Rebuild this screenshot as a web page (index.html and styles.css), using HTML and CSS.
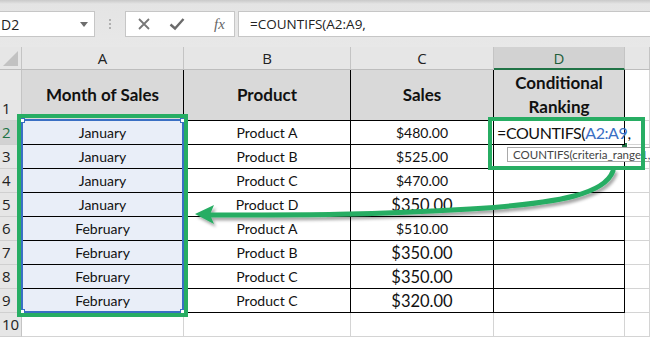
FILE: index.html
```html
<!DOCTYPE html>
<html lang="en">
<head>
    <meta charset="UTF-8">
    <title>COUNTIFS ranking</title>
    <link rel="stylesheet" href="styles.css">
</head>
<body>
    <div class="app">
        <div class="toolbar">
            <div class="name-box">
                <span>D2</span>
                <span class="caret"></span>
            </div>
            <div class="grip"><i></i><i></i><i></i></div>
            <div class="fx-box">
                <svg width="14" height="14" viewBox="0 0 14 14"><path d="M2 2 L12 12 M12 2 L2 12" stroke="#777" stroke-width="1.8" fill="none"/></svg>
                <svg width="16" height="14" viewBox="0 0 16 14"><path d="M1.5 7.5 L6 11.5 L14.5 2" stroke="#6b6b6b" stroke-width="2.4" fill="none"/></svg>
                <span class="fx">fx</span>
            </div>
            <div class="formula-input">=COUNTIFS(A2:A9,</div>
        </div>

        <div class="sheet">
            <!-- column headers -->
            <div class="corner"><span class="tri"></span></div>
            <div class="ch">A</div>
            <div class="ch">B</div>
            <div class="ch">C</div>
            <div class="ch active">D</div>
            <div class="ch"></div>

            <!-- row 1 -->
            <div class="rh">1</div>
            <div class="cell t hd">Month of Sales</div>
            <div class="cell t hd">Product</div>
            <div class="cell t hd">Sales</div>
            <div class="cell t hd">Conditional<br>Ranking</div>
            <div class="cell"></div>

            <!-- row 2 -->
            <div class="rh active">2</div>
            <div class="cell t sel">January</div>
            <div class="cell t">Product A</div>
            <div class="cell t">$480.00</div>
            <div class="cell t edit">=COUNTIFS(<span class="ref">A2:A9</span>,<span class="cursor"></span></div>
            <div class="cell"></div>

            <!-- row 3 -->
            <div class="rh">3</div>
            <div class="cell t sel">January</div>
            <div class="cell t">Product B</div>
            <div class="cell t">$525.00</div>
            <div class="cell t"></div>
            <div class="cell"></div>

            <!-- row 4 -->
            <div class="rh">4</div>
            <div class="cell t sel">January</div>
            <div class="cell t">Product C</div>
            <div class="cell t">$470.00</div>
            <div class="cell t"></div>
            <div class="cell"></div>

            <!-- row 5 -->
            <div class="rh">5</div>
            <div class="cell t sel">January</div>
            <div class="cell t">Product D</div>
            <div class="cell t big">$350.00</div>
            <div class="cell t"></div>
            <div class="cell"></div>

            <!-- row 6 -->
            <div class="rh">6</div>
            <div class="cell t sel">February</div>
            <div class="cell t">Product A</div>
            <div class="cell t">$510.00</div>
            <div class="cell t"></div>
            <div class="cell"></div>

            <!-- row 7 -->
            <div class="rh">7</div>
            <div class="cell t sel">February</div>
            <div class="cell t">Product B</div>
            <div class="cell t big">$350.00</div>
            <div class="cell t"></div>
            <div class="cell"></div>

            <!-- row 8 -->
            <div class="rh">8</div>
            <div class="cell t sel">February</div>
            <div class="cell t">Product C</div>
            <div class="cell t big">$350.00</div>
            <div class="cell t"></div>
            <div class="cell"></div>

            <!-- row 9 -->
            <div class="rh">9</div>
            <div class="cell t sel">February</div>
            <div class="cell t">Product C</div>
            <div class="cell t big">$320.00</div>
            <div class="cell t"></div>
            <div class="cell"></div>

            <!-- row 10 -->
            <div class="rh">10</div>
            <div class="cell"></div>
            <div class="cell"></div>
            <div class="cell"></div>
            <div class="cell"></div>
            <div class="cell"></div>
        </div>

        <!-- overlays -->
        <div class="ref-range">
            <i class="dot tl"></i><i class="dot tr"></i><i class="dot bl"></i><i class="dot br"></i>
        </div>
        <div class="fill-handle"></div>
        <div class="tooltip">COUNTIFS(criteria_range1,</div>
        <div class="mark mark-range"></div>
        <div class="mark mark-formula"></div>

        <svg class="arrow" width="650" height="337" viewBox="0 0 650 337">
            <defs>
                <filter id="shadow" x="-10%" y="-50%" width="120%" height="200%">
                    <feDropShadow dx="2" dy="3" stdDeviation="1.8" flood-color="#000" flood-opacity="0.35"/>
                </filter>
            </defs>
            <g filter="url(#shadow)">
                <path d="M613 171 C605 193 565 203 470 209 S 300 215 210 215" stroke="#27ad63" stroke-width="5" fill="none" stroke-linecap="round"/>
                <path d="M195 214 L214 205 L210 214.5 L214 224 Z" fill="#27ad63"/>
            </g>
        </svg>
    </div>
</body>
</html>
```

FILE: styles.css
```css
body {
    margin: 0;
    font-family: 'Lato', 'Open Sans', sans-serif;
    color: #111;
    background-color: #fff;
    overflow: hidden;
}

.app {
    position: relative;
    width: 650px;
    height: 337px;
    overflow: hidden;
}

/* formula bar */
.toolbar {
    display: flex;
    align-items: stretch;
    height: 26px;
    padding: 11px 0 10px 0;
    background: linear-gradient(#c9c9c9 0, #e4e4e4 4px, #e8e8e8 100%);
    font-family: 'Open Sans', sans-serif;
}

.name-box {
    width: 95px;
    box-sizing: border-box;
    background-color: #fff;
    border: 1px solid #c6c6c6;
    border-left: none;
    display: flex;
    align-items: center;
    justify-content: space-between;
    padding: 0 6px 0 1px;
    font-size: 14px;
    color: #222;
}

.caret {
    width: 0;
    height: 0;
    border-left: 4px solid transparent;
    border-right: 4px solid transparent;
    border-top: 5px solid #6d6d6d;
}

.grip {
    width: 30px;
    display: flex;
    flex-direction: column;
    align-items: center;
    justify-content: center;
    gap: 2px;
}

.grip i {
    width: 2px;
    height: 2px;
    background-color: #b0b0b0;
}

.fx-box {
    width: 110px;
    box-sizing: border-box;
    background-color: #fff;
    border: 1px solid #c6c6c6;
    display: flex;
    align-items: center;
    padding: 0 0 0 11px;
    gap: 18px;
}

.fx {
    font-family: 'Liberation Serif', serif;
    font-style: italic;
    font-size: 15px;
    color: #666;
    margin-left: 11px;
}

.formula-input {
    flex: 1;
    margin-left: 3px;
    background-color: #fff;
    border: 1px solid #c6c6c6;
    border-right: none;
    display: flex;
    align-items: center;
    padding-left: 11px;
    font-size: 13.5px;
    color: #222;
}

/* grid */
.sheet {
    display: grid;
    grid-template-columns: 22px 162px 167px 143px 131px 25px;
    grid-template-rows: 23px 51px repeat(9, 24px);
}

.sheet > div {
    box-sizing: border-box;
}

.corner {
    background-color: #e6e6e6;
    border-right: 1px solid #c4c4c4;
    border-bottom: 1px solid #bdbdbd;
    position: relative;
}

.tri {
    position: absolute;
    right: 3px;
    bottom: 3px;
    width: 0;
    height: 0;
    border-left: 15px solid transparent;
    border-bottom: 15px solid #c2c2c2;
}

.ch {
    background-color: #e6e6e6;
    border-right: 1px solid #c4c4c4;
    border-bottom: 1px solid #bdbdbd;
    display: flex;
    align-items: center;
    justify-content: center;
    font-family: 'Open Sans', sans-serif;
    font-size: 15px;
    color: #222;
}

.ch.active {
    background-color: #d2d2d2;
    border-bottom: 2px solid #217346;
    color: #1f5e3a;
}

.rh {
    background-color: #e6e6e6;
    border-right: 1px solid #c4c4c4;
    border-bottom: 1px solid #d0d0d0;
    display: flex;
    align-items: flex-end;
    padding: 0 0 3px 2px;
    font-family: 'Open Sans', sans-serif;
    font-size: 15px;
    line-height: 18px;
    color: #222;
}

.rh.active {
    background-color: #d2d2d2;
    color: #217346;
}

.cell {
    background-color: #fff;
    border-right: 1px solid #d4d4d4;
    border-bottom: 1px solid #d4d4d4;
    display: flex;
    align-items: center;
    justify-content: center;
    font-size: 14px;
    white-space: nowrap;
}

.cell.t {
    border-color: #000;
}

.cell.hd {
    background-color: #d9d9d9;
    font-weight: bold;
    font-size: 17px;
    line-height: 24px;
    text-align: center;
}

.cell.sel {
    background-color: #e9eef8;
}

.cell.big {
    font-size: 16.5px;
}

.cell.edit {
    justify-content: flex-start;
    padding-left: 3px;
    font-size: 16px;
    letter-spacing: -0.4px;
    overflow: visible;
    position: relative;
    z-index: 1;
}

.ref {
    color: #3a6fc4;
}

.cursor {
    display: inline-block;
    width: 1px;
    height: 17px;
    background-color: #000;
    margin-left: 2px;
}

/* overlays */
.ref-range {
    position: absolute;
    left: 21px;
    top: 119px;
    width: 163px;
    height: 194px;
    box-sizing: border-box;
    border: 2px solid #3a6fc4;
}

.dot {
    position: absolute;
    width: 3px;
    height: 3px;
    background-color: #fff;
    border: 1px solid #3a6fc4;
}

.dot.tl { left: -3px; top: -3px; }
.dot.tr { right: -3px; top: -3px; }
.dot.bl { left: -3px; bottom: -3px; }
.dot.br { right: -3px; bottom: -3px; }

.fill-handle {
    position: absolute;
    left: 621px;
    top: 142px;
    width: 5px;
    height: 5px;
    background-color: #217346;
    border: 1px solid #fff;
}

.tooltip {
    position: absolute;
    left: 507px;
    top: 147px;
    width: 143px;
    height: 15px;
    box-sizing: border-box;
    padding: 0 0 0 5px;
    background-color: #fff;
    border: 1px solid #a9a9a9;
    border-right: none;
    font-family: 'Lato', sans-serif;
    font-size: 11.5px;
    line-height: 13px;
    color: #444;
    white-space: nowrap;
    overflow: hidden;
}

.mark {
    position: absolute;
    box-sizing: border-box;
    border: 4px solid #27ad63;
}

.mark-range {
    left: 17px;
    top: 114px;
    width: 171px;
    height: 203px;
}

.mark-formula {
    left: 488px;
    top: 117px;
    width: 157px;
    height: 53px;
}

.arrow {
    position: absolute;
    left: 0;
    top: 0;
    pointer-events: none;
}
```
